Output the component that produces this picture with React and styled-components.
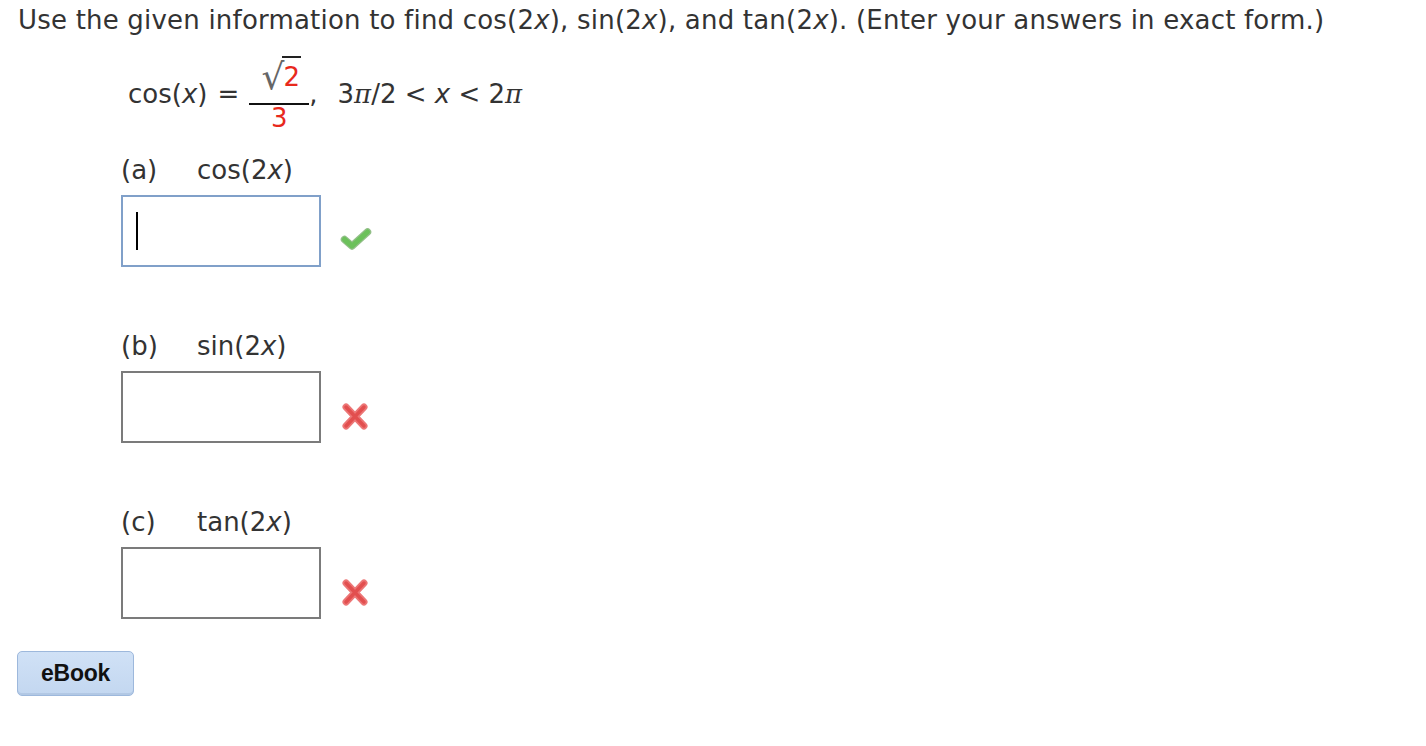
import React from "react";
import styled, { createGlobalStyle } from "styled-components";

const Global = createGlobalStyle`
  html, body { margin: 0; padding: 0; background: #fff; }
  body { font-family: "DejaVu Sans", Verdana, sans-serif; color: #333; }
`;

const Page = styled.div`
  padding: 4px 0 0 18px;
  display: flex;
  flex-direction: column;
`;

const Title = styled.div`
  font-size: 26px;
  line-height: 32px;
  letter-spacing: 0.2px;
  color: #333;
  white-space: nowrap;
`;

const I = styled.i`
  font-style: italic;
`;

const Pi = styled.span`
  font-family: "DejaVu Serif", serif;
  font-style: italic;
`;

const Body = styled.div`
  padding-left: 103px;
  display: flex;
  flex-direction: column;
`;

const Equation = styled.div`
  display: flex;
  align-items: center;
  padding-left: 7px;
  margin-top: 16px;
  font-size: 26px;
  height: 84px;
`;

const Eq = styled.span`
  margin: 0 10px 0 10px;
`;

const Frac = styled.span`
  display: inline-flex;
  flex-direction: column;
  align-items: center;
  width: 60px;
`;

const Num = styled.span`
  display: flex;
  align-items: flex-end;
  height: 47px;
  padding-bottom: 7px;
  box-sizing: border-box;
  margin-left: 4px;
`;

const Radical = styled.span`
  color: #666;
  font-size: 36px;
  line-height: 38px;
  margin-right: -2px;
`;

const Red = styled.span`
  color: #e8291c;
`;

const Radicand = styled(Red)`
  border-top: 2px solid #222;
  line-height: 38px;
  padding: 0 1px;
`;

const Bar = styled.span`
  align-self: stretch;
  height: 2px;
  background: #111;
`;

const Den = styled(Red)`
  line-height: 27px;
  height: 27px;
`;

const Comma = styled.span`
  margin-right: 20px;
`;

const Part = styled.div`
  display: flex;
  flex-direction: column;
  margin-top: ${(p) => p.$top}px;
`;

const Label = styled.div`
  font-size: 26px;
  line-height: 32px;
  display: flex;
`;

const Letter = styled.span`
  width: 76px;
`;

const AnswerRow = styled.div`
  display: flex;
  align-items: center;
  margin-top: 9px;
  gap: 19px;
`;

const Box = styled.div`
  box-sizing: border-box;
  width: 200px;
  height: 72px;
  border: 2px solid ${(p) => (p.$focus ? "#80a0c9" : "#7b7b7b")};
  background: #fff;
  display: flex;
  align-items: center;
  padding-left: 13px;
`;

const Caret = styled.span`
  width: 2px;
  height: 38px;
  background: #000;
`;

const Icon = styled.svg`
  margin-top: ${(p) => p.$down}px;
  flex: none;
`;

const EBook = styled.button`
  margin-top: 32px;
  margin-left: -1px;
  align-self: flex-start;
  width: 117px;
  height: 45px;
  border: 1px solid #9db8dc;
  border-radius: 5px;
  background: linear-gradient(#d0e1f6, #c3d7f0);
  box-shadow: inset 0 -2px 0 #b2c8e4;
  font-family: "Liberation Sans", Arial, sans-serif;
  font-weight: bold;
  font-size: 23px;
  color: #111;
  letter-spacing: -0.3px;
  padding: 0;
`;

const Check = () => (
  <Icon $down={15} width="32" height="24" viewBox="0 0 32 24">
    <path d="M4.5 12.5 L12 19 L27.5 5" fill="none" stroke="#4a9438" strokeWidth="7.5" strokeLinecap="round" strokeLinejoin="round" opacity="0.6" />
    <path d="M4.5 12.5 L12 19 L27.5 5" fill="none" stroke="#6cc15b" strokeWidth="5" strokeLinecap="round" strokeLinejoin="round" />
  </Icon>
);

const Cross = () => (
  <Icon $down={19} width="30" height="28" viewBox="0 0 30 28">
    <g strokeLinecap="round" fill="none">
      <path d="M6 4 L24 23 M24 4 L6 23" stroke="#ec7676" strokeWidth="7" />
      <path d="M6 4 L24 23 M24 4 L6 23" stroke="#e24f4f" strokeWidth="3.5" />
    </g>
  </Icon>
);

const parts = [
  { letter: "(a)", fn: "cos", ok: true, top: 18 },
  { letter: "(b)", fn: "sin", ok: false, top: 63 },
  { letter: "(c)", fn: "tan", ok: false, top: 63 },
];

export default function App() {
  return (
    <>
      <Global />
      <Page>
        <Title>
          Use the given information to find cos(2<I>x</I>), sin(2<I>x</I>), and tan(2<I>x</I>). (Enter your answers in exact form.)
        </Title>
        <Body>
          <Equation>
            <span>cos(<I>x</I>)</span>
            <Eq>=</Eq>
            <Frac>
              <Num>
                <Radical>√</Radical>
                <Radicand>2</Radicand>
              </Num>
              <Bar />
              <Den>3</Den>
            </Frac>
            <Comma>,</Comma>
            <span>
              3<Pi>π</Pi>/2 &lt; <I>x</I> &lt; 2<Pi>π</Pi>
            </span>
          </Equation>
          {parts.map((p) => (
            <Part key={p.letter} $top={p.top}>
              <Label>
                <Letter>{p.letter}</Letter>
                <span>
                  {p.fn}(2<I>x</I>)
                </span>
              </Label>
              <AnswerRow>
                <Box $focus={p.ok}>{p.ok && <Caret />}</Box>
                {p.ok ? <Check /> : <Cross />}
              </AnswerRow>
            </Part>
          ))}
        </Body>
        <EBook>eBook</EBook>
      </Page>
    </>
  );
}
